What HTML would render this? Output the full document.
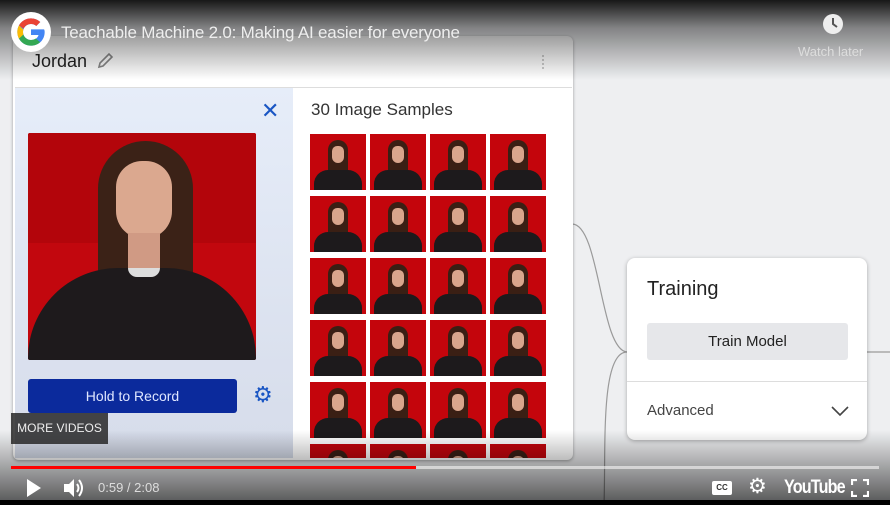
<!DOCTYPE html>
<html><head><style>
*{margin:0;padding:0;box-sizing:border-box}
body{width:890px;height:505px;overflow:hidden;background:#eeeff1;font-family:"Liberation Sans",sans-serif;position:relative}
.abs{position:absolute}
.card{left:13px;top:36px;width:560px;height:424px;background:#fff;border-radius:6px;box-shadow:0 1px 3px rgba(0,0,0,.35)}
.tile{position:absolute;width:56px;height:56px;background:#c4050c;overflow:hidden}
.tile .h{position:absolute;left:18px;top:6px;width:20px;height:40px;background:#3a1f14;border-radius:10px 10px 4px 4px}
.tile .f{position:absolute;left:22px;top:12px;width:12px;height:17px;background:#d9a58c;border-radius:6px 6px 7px 7px}
.tile .b{position:absolute;left:4px;top:36px;width:48px;height:24px;background:#1d1a1c;border-radius:14px 14px 0 0}
</style></head><body>
<svg class="abs" style="left:0;top:0" width="890" height="505">
<path d="M572 224 C600 224 600 350 627 352" stroke="#9a9a9a" fill="none" stroke-width="1.2"/>
<path d="M627 352 C600 352 606 450 604 505" stroke="#9a9a9a" fill="none" stroke-width="1.2"/>
<path d="M867 352 L890 352" stroke="#9a9a9a" fill="none" stroke-width="1.2"/>
</svg>
<div class="abs card"></div>
<div class="abs" style="left:32px;top:51px;font-size:18px;color:#222">Jordan</div>
<svg class="abs" style="left:96px;top:52px" width="18" height="18"><path d="M3 15 L4 11 L13 2 L16 5 L7 14 Z" fill="none" stroke="#888" stroke-width="1.6"/></svg>
<div class="abs" style="left:542px;top:55px;width:3px;height:14px;border-left:2px dotted #ccc"></div>
<div class="abs" style="left:15px;top:87px;width:557px;height:1px;background:#ddd"></div>
<div class="abs" style="left:15px;top:88px;width:278px;height:370px;background:linear-gradient(#e6edf9,#d6dcea)"></div>
<div class="abs" style="left:261px;top:100px;font-size:22px;color:#1a56c4;line-height:22px">✕</div>
<div class="abs" style="left:311px;top:100px;font-size:17px;color:#333">30 Image Samples</div>
<div class="abs" style="left:28px;top:133px;width:228px;height:227px;background:#c2070e;overflow:hidden;border-radius:2px">
 <div class="abs" style="left:0;top:0;width:228px;height:110px;background:#b3050b"></div>
 <div class="abs" style="left:70px;top:8px;width:95px;height:190px;background:#3b2217;border-radius:48px 48px 10px 10px"></div>
 <div class="abs" style="left:88px;top:28px;width:56px;height:78px;background:#dba88f;border-radius:28px 28px 30px 30px"></div>
 <div class="abs" style="left:100px;top:100px;width:32px;height:35px;background:#d09a84"></div>
 <div class="abs" style="left:0;top:135px;width:228px;height:110px;background:#1e1a1c;border-radius:90px 90px 0 0"></div>
 <div class="abs" style="left:100px;top:135px;width:32px;height:9px;background:#ddd;border-radius:0 0 15px 15px"></div>
</div>
<div class="abs" style="left:28px;top:379px;width:209px;height:34px;background:#0b2a9c;border-radius:3px;color:#dfe6ff;font-size:14px;text-align:center;line-height:34px">Hold to Record</div>
<div class="abs" style="left:253px;top:384px;font-size:22px;color:#1a56c4;line-height:22px">⚙</div>
<div id="tiles"></div>
<script>
var s='';for(var r=0;r<6;r++)for(var c=0;c<4;c++){var h=r==5?14:56;s+='<div class="tile" style="left:'+(310+c*60)+'px;top:'+(134+r*62)+'px;height:'+h+'px"><div class="h"></div><div class="f"></div><div class="b"></div></div>';}
document.getElementById('tiles').innerHTML=s;
</script>
<div class="abs" style="left:627px;top:258px;width:240px;height:182px;background:#fff;border-radius:8px;box-shadow:0 1px 4px rgba(0,0,0,.3)"></div>
<div class="abs" style="left:647px;top:278px;font-size:20px;color:#222">Training</div>
<div class="abs" style="left:647px;top:323px;width:201px;height:37px;background:#e6e7ea;border-radius:3px;text-align:center;line-height:37px;font-size:15px;color:#222">Train Model</div>
<div class="abs" style="left:627px;top:381px;width:240px;height:1px;background:#ddd"></div>
<div class="abs" style="left:647px;top:402px;font-size:15px;color:#444">Advanced</div>
<svg class="abs" style="left:830px;top:404px" width="20" height="14"><path d="M2 3 L10 11 L18 3" stroke="#444" fill="none" stroke-width="1.6"/></svg>
<div class="abs" style="left:0;top:0;width:890px;height:80px;background:linear-gradient(rgba(0,0,0,.9),rgba(0,0,0,.45) 35%,rgba(0,0,0,0))"></div>
<div class="abs" style="left:0;top:430px;width:890px;height:75px;background:linear-gradient(rgba(0,0,0,0),rgba(0,0,0,.65))"></div>
<div class="abs" style="left:0;top:500px;width:890px;height:5px;background:#000"></div>
<div class="abs" style="left:11px;top:12px;width:40px;height:40px;border-radius:50%;background:#fff"></div>
<svg class="abs" style="left:15px;top:16px" width="32" height="32" viewBox="0 0 48 48">
<path d="M43.6 20H24v8.5h11.3C34 33.4 29.6 36 24 36c-6.6 0-12-5.4-12-12s5.4-12 12-12c3 0 5.8 1.1 7.9 3l6-6C34.3 5.7 29.4 3.5 24 3.5 12.7 3.5 3.5 12.7 3.5 24S12.7 44.5 24 44.5c11.3 0 20.5-8.2 20.5-20.5 0-1.4-.2-2.7-.9-4z" fill="#4285f4"/>
<path d="M6 14l7 5c1.8-4.3 6-7 11-7 3 0 5.8 1.1 7.9 3l6-6C34.3 5.7 29.4 3.5 24 3.5 16 3.5 9.2 8 6 14z" fill="#ea4335"/>
<path d="M24 44.5c5.3 0 10.1-2 13.7-5.3l-6.5-5.4C29.3 35.2 26.8 36 24 36c-5.3 0-9.8-3.4-11.4-8.2l-7 5.4C9 40 16 44.5 24 44.5z" fill="#34a853"/>
<path d="M12.6 27.8c-.4-1.2-.6-2.5-.6-3.8s.2-2.6.6-3.8L6 14C4.4 17 3.5 20.4 3.5 24s.9 7 2.5 10z" fill="#fbbc05"/>
</svg>
<div class="abs" style="left:61px;top:23px;font-size:17px;color:#eee;letter-spacing:-.2px">Teachable Machine 2.0: Making AI easier for everyone</div>
<svg class="abs" style="left:822px;top:13px" width="22" height="22"><circle cx="11" cy="11" r="10" fill="#eee"/><path d="M11 5 V11 L15 14" stroke="#555" stroke-width="2" fill="none"/></svg>
<div class="abs" style="left:798px;top:44px;font-size:13px;color:#ddd">Watch later</div>
<div class="abs" style="left:11px;top:413px;width:97px;height:31px;background:rgba(40,40,40,.85);color:#eee;font-size:12px;line-height:31px;text-align:center">MORE VIDEOS</div>
<div class="abs" style="left:11px;top:466px;width:868px;height:3px;background:rgba(255,255,255,.55)"></div>
<div class="abs" style="left:11px;top:466px;width:405px;height:3px;background:#f00"></div>
<svg class="abs" style="left:26px;top:479px" width="16" height="18"><path d="M1 0 L15 9 L1 18Z" fill="#fff"/></svg>
<svg class="abs" style="left:63px;top:478px" width="22" height="20"><path d="M1 6 H6 L11 1 V19 L6 14 H1Z" fill="#fff"/><path d="M14 6 Q17 10 14 14 M16 2 Q22 10 16 18" stroke="#fff" stroke-width="2" fill="none"/></svg>
<div class="abs" style="left:98px;top:480px;font-size:13px;color:#ddd">0:59 / 2:08</div>
<div class="abs" style="left:712px;top:481px;width:20px;height:14px;background:#fff;border-radius:2px;font-size:8px;font-weight:bold;color:#333;text-align:center;line-height:14px">CC</div>
<div class="abs" style="left:748px;top:476px;font-size:21px;color:#fff;line-height:22px">⚙</div>
<div class="abs" style="left:784px;top:477px;font-size:19px;color:#fff;font-weight:bold;letter-spacing:-1px;transform:scaleX(.85);transform-origin:left">YouTube</div>
<svg class="abs" style="left:851px;top:479px" width="18" height="18"><path d="M1 6V1H6 M12 1H17V6 M17 12V17H12 M6 17H1V12" stroke="#fff" stroke-width="2.2" fill="none"/></svg>
</body></html>
